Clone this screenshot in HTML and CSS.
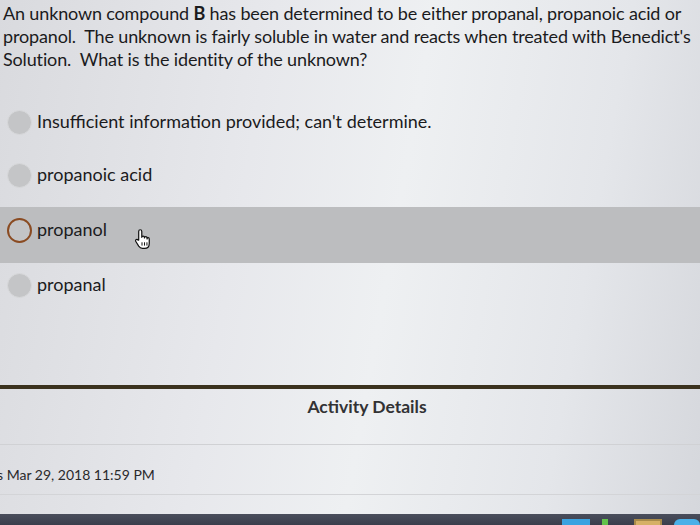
FILE: index.html
```html
<!DOCTYPE html>
<html>
<head>
<meta charset="utf-8">
<link rel="stylesheet" href="styles.css">
</head>
<body>
<div class="page">
  <div class="question">
    <p>An unknown compound <b>B</b> has been determined to be either propanal, propanoic acid or<br>propanol.&nbsp; The unknown is fairly soluble in water and reacts when treated with Benedict's<br>Solution.&nbsp; What is the identity of the unknown?</p>
  </div>
  <div class="options">
    <div class="opt first"><span class="radio"></span><span class="label">Insufficient information provided; can't determine.</span></div>
    <div class="opt second"><span class="radio"></span><span class="label">propanoic acid</span></div>
    <div class="opt hover"><span class="radio ring"></span><span class="label">propanol</span>
      <svg class="cursor" width="18" height="22" viewBox="0 0 16 20">
        <path d="M5 11V3.2c0-1 .7-1.6 1.4-1.6S7.8 2.2 7.8 3.2V8.5c0-.8.6-1.2 1.2-1.2s1.2.4 1.2 1.2v.6c0-.8.6-1.2 1.2-1.2s1.2.4 1.2 1.2v.8c0-.8.5-1.1 1-1.1s1 .4 1 1.1V14c0 2.6-1.7 4.5-4.3 4.5H8.4c-1.6 0-2.6-.8-3.4-2L2.4 12.3c-.5-.8-.2-1.6.4-1.9.6-.3 1.300 0 1.7.6z" fill="#fff" stroke="#111" stroke-width="1.1" stroke-linejoin="round"/>
        <path d="M8 13v3M10.3 13v3M12.5 13v3" stroke="#111" stroke-width="0.9"/>
      </svg>
    </div>
    <div class="opt last"><span class="radio"></span><span class="label">propanal</span></div>
  </div>
  <div class="footer">
    <div class="rule"></div>
    <div class="details">Activity Details</div>
    <div class="date">s Mar 29, 2018 11:59 PM</div>
  </div>
  <div class="spacer"></div>
  <div class="taskbar">
    <span class="tb-icon blue"></span>
    <span class="tb-icon green"></span>
    <span class="tb-icon folder"></span>
    <span class="tb-icon round"></span>
  </div>
</div>
</body>
</html>
```
FILE: styles.css
```css
* { box-sizing: border-box; }
html, body { margin: 0; padding: 0; }
body {
  width: 700px;
  height: 525px;
  overflow: hidden;
  font-family: Lato, "Open Sans", "Liberation Sans", sans-serif;
  color: #1b1b1d;
  background: linear-gradient(100deg, #d9dade 0%, #e7e8ec 35%, #eef0f2 55%, #e4e6ea 80%, #d5d7dc 100%);
}
.page {
  position: relative;
  width: 700px;
  height: 525px;
  display: flex;
  flex-direction: column;
}
.question { padding: 2px 0 0 3px; height: 72px; }
.question p {
  margin: 0;
  font-size: 18px;
  line-height: 23px;
  letter-spacing: -0.15px;
  white-space: nowrap;
}
.question b { font-weight: 700; }
.options {
  margin-top: 24px;
  display: flex;
  flex-direction: column;
}
.opt {
  position: relative;
  display: flex;
  align-items: center;
  gap: 5px;
  padding-left: 7px;
  font-size: 18px;
}
.opt.first { height: 52px; }
.opt.second { height: 54px; }
.opt.hover { margin-top: 5px; height: 56px; padding-bottom: 10px; background: #bcbdbf; }
.opt.last { height: 44px; }
.radio {
  width: 25px;
  height: 25px;
  border-radius: 50%;
  background: #c4c5c7;
  border: 1px solid #d8d9db;
  flex: none;
}
.radio.ring {
  background: #c3c4c6;
  border: 2.5px solid #8a4b22;
}
.label { margin-top: -2px; }
.cursor {
  position: absolute;
  left: 133px;
  top: 21px;
}
.footer {
  margin-top: 78px;
  display: flex;
  flex-direction: column;
}
.rule {
  height: 4px;
  background: #3b321e;
}
.details {
  text-align: center;
  font-weight: 700;
  font-size: 17.5px;
  color: #323234;
  padding: 7px 0 0 34px;
  height: 56px;
  border-bottom: 1px solid #d0d1d4;
}
.date {
  font-size: 14px;
  color: #2a2a2c;
  padding: 21px 0 0 0;
  height: 50px;
  border-bottom: 1px solid #d3d4d7;
  margin-left: -3px;
}
.spacer { height: 19px; }
.taskbar {
  flex: 1;
  background: linear-gradient(180deg, #4a4e5c, #3a3e4c);
  display: flex;
  justify-content: flex-end;
  align-items: flex-end;
  gap: 12px;
}
.tb-icon { display: block; height: 6px; }
.blue { width: 28px; background: #3aa2e0; }
.green { width: 6px; background: #62c24a; margin-right: 14px; }
.folder { width: 28px; background: #d6b066; border: 2px solid #a88a4a; border-bottom: 0; }
.round { width: 26px; background: #4ab0e8; border-radius: 13px 13px 0 0; }
```
